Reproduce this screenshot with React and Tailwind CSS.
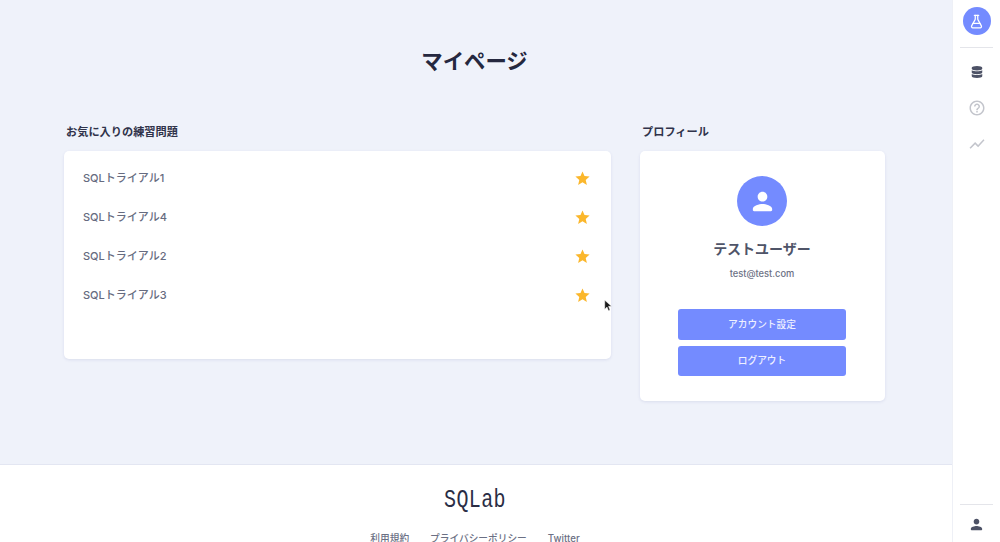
import React from "react";
import { FlaskConical } from "lucide-react";
import { FaDatabase } from "react-icons/fa";

const sans = "font-['Inter','Noto_Sans_CJK_JP',sans-serif]";
const PERSON = "M12 12c2.21 0 4-1.79 4-4s-1.79-4-4-4-4 1.79-4 4 1.79 4 4 4zm0 2c-2.67 0-8 1.34-8 4v1c0 .55.45 1 1 1h14c.55 0 1-.45 1-1v-1c0-2.66-5.33-4-8-4z";

function Star() {
  return (
    <svg viewBox="0 0 24 24" className="w-[17px] h-[17px] fill-[#fbb72c]">
      <path d="M12 17.27L18.18 21l-1.64-6.97L22 9.24l-7.19-.61L12 2 9.19 8.63 2 9.24l5.46 4.73L5.82 21z" />
    </svg>
  );
}

function Item({ label }) {
  return (
    <div className="h-[39px] flex items-center justify-between">
      <span className="text-[11px] font-medium text-[#666b80]">{label}</span>
      <Star />
    </div>
  );
}

export default function App() {
  return (
    <div className={`relative flex h-[542px] w-full overflow-hidden bg-white ${sans}`}>
      <div className="flex-1 min-w-0 flex flex-col">
        <main className="h-[465px] shrink-0 bg-[#eff2fa] pl-16 border-b border-[#e3e6f2]">
          <h1 className="pt-[45px] pr-[67px] text-center text-[21.4px] leading-[32px] font-bold text-[#25283f]">マイページ</h1>
          <div className="mt-[46px] flex gap-[29px]">
            <section className="w-[547px]">
              <h2 className="pl-[2px] text-[11.2px] leading-[18px] font-bold text-[#30334a]">お気に入りの練習問題</h2>
              <div className="mt-[10px] h-[208px] rounded-[5px] bg-white shadow-[0_1px_3px_rgba(90,100,160,0.14)] pl-[19px] pr-5 pt-2">
                <Item label="SQLトライアル1" />
                <Item label="SQLトライアル4" />
                <Item label="SQLトライアル2" />
                <Item label="SQLトライアル3" />
              </div>
            </section>
            <section className="w-[245px]">
              <h2 className="pl-[2px] text-[11.2px] leading-[18px] font-bold text-[#30334a]">プロフィール</h2>
              <div className="mt-[10px] h-[250px] rounded-[5px] bg-white shadow-[0_1px_3px_rgba(90,100,160,0.14)] pl-[38px] pr-[39px] pt-[25px] flex flex-col items-center">
                <div className="w-[50px] h-[50px] rounded-full bg-[#748bff] flex items-center justify-center">
                  <svg viewBox="0 0 24 24" className="w-[29px] h-[29px] fill-white"><path d={PERSON} /></svg>
                </div>
                <div className="mt-[12px] text-[14px] leading-[22px] font-bold text-[#4f5468]">テストユーザー</div>
                <div className="mt-[4px] text-[9.3px] leading-[20px] font-medium text-[#6b7084]">test@test.com</div>
                <button className="mt-[25px] w-full h-[31px] pt-px rounded-[3px] bg-[#748bff] text-[9.7px] font-medium text-[#eef0ff]">アカウント設定</button>
                <button className="mt-[6px] w-full h-[30px] pt-px rounded-[3px] bg-[#748bff] text-[9.7px] font-medium text-[#eef0ff]">ログアウト</button>
              </div>
            </section>
          </div>
        </main>
        <footer className="flex-1 bg-white flex flex-col items-center pr-[2px]">
          <div className="mt-[24px] h-[24px] leading-[24px] text-[20px] tracking-[0.4px] scale-y-[1.3] text-[#2a2d45] font-['Liberation_Mono',monospace]">SQLab</div>
          <nav className="mt-[18px] flex gap-[21px] text-[9.7px] leading-[16px] font-medium text-[#6b7084]">
            <span>利用規約</span>
            <span>プライバシーポリシー</span>
            <span>Twitter</span>
          </nav>
        </footer>
      </div>
      <aside className="w-12 shrink-0 bg-white flex flex-col items-center border-l border-[#eef0f6]">
        <div className="mt-[7px] w-7 h-7 rounded-full bg-[#748bff] flex items-center justify-center">
          <FlaskConical size={15} color="#ffffff" strokeWidth={2} />
        </div>
        <div className="mt-3 w-[33px] h-px bg-[#e4e5ea]" />
        <div className="mt-[18px] h-[12px] flex items-center"><FaDatabase size={12} color="#4d5266" /></div>
        <svg viewBox="0 0 24 24" className="mt-[21px] w-[18px] h-[18px] fill-[#c3c5cc]"><path d="M11 18h2v-2h-2v2zm1-16C6.48 2 2 6.48 2 12s4.48 10 10 10 10-4.48 10-10S17.52 2 12 2zm0 18c-4.41 0-8-3.59-8-8s3.59-8 8-8 8 3.59 8 8-3.59 8-8 8zm0-14c-2.21 0-4 1.79-4 4h2c0-1.1.9-2 2-2s2 .9 2 2c0 2-3 1.75-3 5h2c0-2.25 3-2.5 3-5 0-2.21-1.79-4-4-4z" /></svg>
        <svg viewBox="0 0 24 24" className="mt-[18px] w-[18px] h-[18px] fill-[#c3c5cc]"><path d="M3.5 18.49l6-6.01 4 4L22 6.92l-1.41-1.41-7.09 7.97-4-4L2 16.99z" /></svg>
        <div className="mt-auto w-[33px] h-px bg-[#e4e5ea]" />
        <svg viewBox="0 0 24 24" className="mt-[11px] mb-[9px] w-[17px] h-[17px] fill-[#4d5266]"><path d={PERSON} /></svg>
      </aside>
      <svg viewBox="0 0 12 16" className="absolute left-[604px] top-[299px] w-[9px] h-[13px]">
        <path d="M1 1v12l3-3 2 5 2-1-2-5h4z" fill="#1a1a1a" stroke="#ffffff" strokeWidth="0.6" />
      </svg>
    </div>
  );
}
